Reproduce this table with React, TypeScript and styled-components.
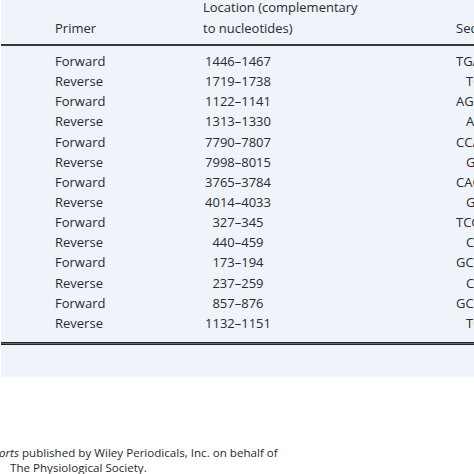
import React from 'react'
import styled, { createGlobalStyle } from 'styled-components'

const GlobalStyle = createGlobalStyle`
  html, body {
    margin: 0;
    padding: 0;
    background: #ffffff;
    width: 474px;
    height: 474px;
    overflow: hidden;
  }
`

type Row = { primer: string; location: string; seq: string }

const rows: Row[] = [
  { primer: 'Forward', location: '1446–1467', seq: 'TGAGCATCCAGAAGCTGCA' },
  { primer: 'Reverse', location: '1719–1738', seq: 'TCGATGTCCTGGACTT' },
  { primer: 'Forward', location: '1122–1141', seq: 'AGGTCGGTGTGAACGGATTTG' },
  { primer: 'Reverse', location: '1313–1330', seq: 'ATGTAGGCCATGAGGTC' },
  { primer: 'Forward', location: '7790–7807', seq: 'CCAAGCTGCTTTGTGCTGT' },
  { primer: 'Reverse', location: '7998–8015', seq: 'GTGGCAGACGGAACAG' },
  { primer: 'Forward', location: '3765–3784', seq: 'CAGCAACTCCAGTCTGCAAG' },
  { primer: 'Reverse', location: '4014–4033', seq: 'GGTGTTCACTGCCCTC' },
  { primer: 'Forward', location: '327–345', seq: 'TCGGAGCCTGAAGTCCTTC' },
  { primer: 'Reverse', location: '440–459', seq: 'CTGGAAGCTCGCATCA' },
  { primer: 'Forward', location: '173–194', seq: 'GCTACCTGGACTCCTCGAAC' },
  { primer: 'Reverse', location: '237–259', seq: 'CAGGTCTCTGCAGTTCC' },
  { primer: 'Forward', location: '857–876', seq: 'GCAGGAGTATGACGAGTCTG' },
  { primer: 'Reverse', location: '1132–1151', seq: 'TGCGTGGTCCATTCTT' },
]

function App() {
  return (
    <>
      <GlobalStyle />
      <Page>
        <Panel>
          <HeaderRow>
            <PrimerCell>Primer</PrimerCell>
            <HeadLocation>
              Location (complementary
              <br />
              to nucleotides)
            </HeadLocation>
            <SeqCell>Sequence (5′–3′)</SeqCell>
          </HeaderRow>
          <Body>
            {rows.map((r, i) => (
              <DataRow key={i}>
                <PrimerCell>{r.primer}</PrimerCell>
                <LocationCell>{r.location}</LocationCell>
                <SeqCell $reverse={r.primer === 'Reverse'}>{r.seq}</SeqCell>
              </DataRow>
            ))}
          </Body>
          <BottomRule />
        </Panel>
        <Footer>
          <p>
            <em>orts</em> published by Wiley Periodicals, Inc. on behalf of
          </p>
          <p className="second">The Physiological Society.</p>
        </Footer>
      </Page>
    </>
  )
}

const Page = styled.div`
  width: 474px;
  height: 474px;
  display: flex;
  flex-direction: column;
  font-family: "Open Sans", "Noto Sans", sans-serif;
  font-variant-ligatures: none;
  color: #2b2b2e;
  overflow: hidden;
`

const Panel = styled.div`
  height: 377px;
  flex-shrink: 0;
  margin: 0 0 0 1px;
  background: #eff3fa;
  display: flex;
  flex-direction: column;
  overflow: hidden;
`

const gridCols = `
  display: grid;
  grid-template-columns: 54px 148px 70px 183px 1fr;
  white-space: nowrap;
`

const HeaderRow = styled.div`
  ${gridCols}
  align-items: end;
  margin-top: -3px;
  padding-bottom: 6px;
  border-bottom: 2.5px solid #38383b;
  font-size: 13px;
  line-height: 19px;
  &::before {
    content: '';
  }
`

const Body = styled.div`
  padding-top: 5px;
  display: flex;
  flex-direction: column;
`

const DataRow = styled.div`
  ${gridCols}
  height: 20.15px;
  font-size: 13px;
  line-height: 20px;
  &::before {
    content: '';
  }
`

const PrimerCell = styled.div``

const HeadLocation = styled.div`
  grid-column: 3 / span 2;
  line-height: 20.5px;
`

const LocationCell = styled.div`
  text-align: center;
`

const SeqCell = styled.div<{ $reverse?: boolean }>`
  grid-column: 5;
  padding-left: ${(p) => (p.$reverse ? '10px' : '0')};
`

const BottomRule = styled.div`
  margin-top: 9px;
  height: 1px;
  border-top: 1.5px solid #222224;
  border-bottom: 1.5px solid #222224;
  background: #6a6a6e;
`

const Footer = styled.div`
  margin-top: 68px;
  font-size: 11.6px;
  line-height: 15px;
  color: #2a2a2c;
  p {
    margin: 0;
    white-space: nowrap;
  }
  p:first-child {
    margin-left: -1px;
  }
  .second {
    padding-left: 10px;
  }
`

export default App
